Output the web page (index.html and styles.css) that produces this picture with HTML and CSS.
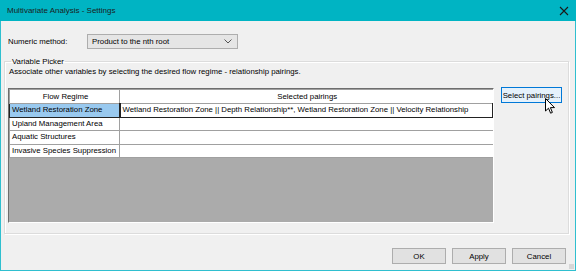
FILE: index.html
```html
<!DOCTYPE html>
<html lang="en">
<head>
  <meta charset="UTF-8">
  <title>Multivariate Analysis - Settings</title>
  <link rel="stylesheet" href="styles.css">
</head>
<body>
  <div class="window">
    <div class="titlebar">
      <span class="title">Multivariate Analysis - Settings</span>
      <svg class="close" width="10" height="10" viewBox="0 0 10 10">
        <path d="M1 1 L9 9 M9 1 L1 9" stroke="#1a1a1a" stroke-width="1.1" fill="none"/>
      </svg>
    </div>

    <div class="content">
      <div class="method-row">
        <label class="method-label">Numeric method:</label>
        <div class="combo">
          <span>Product to the nth root</span>
          <svg width="8" height="5" viewBox="0 0 8 5">
            <path d="M0.5 0.5 L4 4 L7.5 0.5" stroke="#555" stroke-width="1" fill="none"/>
          </svg>
        </div>
      </div>

      <fieldset class="group">
        <legend>Variable Picker</legend>
        <p class="hint">Associate other variables by selecting the desired flow regime - relationship pairings.</p>
        <div class="picker">
          <div class="grid">
            <table>
              <thead>
                <tr><th class="col-a">Flow Regime</th><th>Selected pairings</th></tr>
              </thead>
              <tbody>
                <tr class="current">
                  <td class="selected">Wetland Restoration Zone</td>
                  <td class="focused">Wetland Restoration Zone || Depth Relationship**, Wetland Restoration Zone || Velocity Relationship</td>
                </tr>
                <tr><td>Upland Management Area</td><td></td></tr>
                <tr><td>Aquatic Structures</td><td></td></tr>
                <tr><td>Invasive Species Suppression</td><td></td></tr>
              </tbody>
            </table>
          </div>
          <div class="side">
            <button class="btn btn-hover">Select pairings...</button>
            <svg class="cursor" width="11" height="17" viewBox="0 0 11 17">
              <path d="M0.5 0.5 L0.5 13 L3.5 10.2 L5.6 15.2 L7.4 14.4 L5.4 9.6 L9.5 9.6 Z" fill="#fff" stroke="#000" stroke-width="1"/>
            </svg>
          </div>
        </div>
      </fieldset>

      <div class="footer">
        <button class="btn">OK</button>
        <button class="btn">Apply</button>
        <button class="btn">Cancel</button>
      </div>
      <div class="grip"></div>
    </div>
  </div>
</body>
</html>
```

FILE: styles.css
```css
body { margin: 0; font-family: "Liberation Sans", Arial, sans-serif; font-size: 7.8px; color: #000; background: #fff; }
.window { width: 576px; height: 271px; box-sizing: border-box; border: 1px solid #2fbfcf; border-top: none; display: flex; flex-direction: column; }
.titlebar { height: 21px; background: #00b4c3; display: flex; align-items: center; justify-content: space-between; padding: 0 7px 0 7px; margin: 0 -1px; }
.title { font-size: 8px; color: #1c1c1c; }
.content { flex: 1; background: #f0f0f0; position: relative; padding: 0 6px 0 3px; display: flex; flex-direction: column; }
.method-row { display: flex; align-items: center; margin-top: 13px; padding-left: 4px; height: 15px; }
.method-label { width: 79px; }
.combo { width: 151px; height: 15px; box-sizing: border-box; background: #e5e5e5; border: 1px solid #adadad; display: flex; align-items: center; justify-content: space-between; padding: 0 5px 0 4px; }
.group { margin: 8px 0 0 0; padding: 0 0 10px 3px; border: 1px solid #dcdcdc; box-shadow: inset 1px 1px 0 #fff, 1px 1px 0 #fff; min-width: 0; }
.group legend { padding: 0 1px; margin-left: 3px; }
.hint { margin: 1px 0 0 1px; }
.picker { display: flex; margin-top: 12px; }
.grid { width: 486px; height: 135px; box-sizing: border-box; background: #ababab; border: 1px solid #6e6e6e; border-right-color: #fff; border-bottom-color: #fff; overflow: hidden; }
table { border-collapse: collapse; width: 485px; table-layout: fixed; }
th, td { height: 13.5px; padding: 0 0 0 2px; border: 1px solid #a0a0a0; background: #fff; white-space: nowrap; overflow: hidden; text-align: left; font-weight: normal; box-sizing: border-box; line-height: 12px; }
th { height: 14px; text-align: center; }
th.col-a { width: 110px; }
td.selected { background: #99c9ef; }
tr.current td { border-top: 1px solid #222; border-bottom: 1px solid #222; }
tr.current td.selected { border-left: 1px solid #222; }
td.focused { border: 2px solid #222; }
.side { position: relative; margin-left: 7px; margin-top: -1px; }
.btn { font-family: inherit; font-size: 7.8px; background: #e1e1e1; border: 1px solid #adadad; height: 16px; width: 54px; padding: 0; color: #000; }
.btn-hover { background: #e5f1fb; border-color: #0078d7; width: 61px; }
.cursor { position: absolute; left: 44px; top: 11px; }
.footer { display: flex; justify-content: flex-end; gap: 6px; margin-top: 14px; padding-right: 3px; }
.grip { position: absolute; right: 1px; bottom: 1px; width: 5px; height: 5px; background: radial-gradient(circle, #b8b8b8 0.6px, transparent 0.8px) 0 0 / 2px 2px; }
```
